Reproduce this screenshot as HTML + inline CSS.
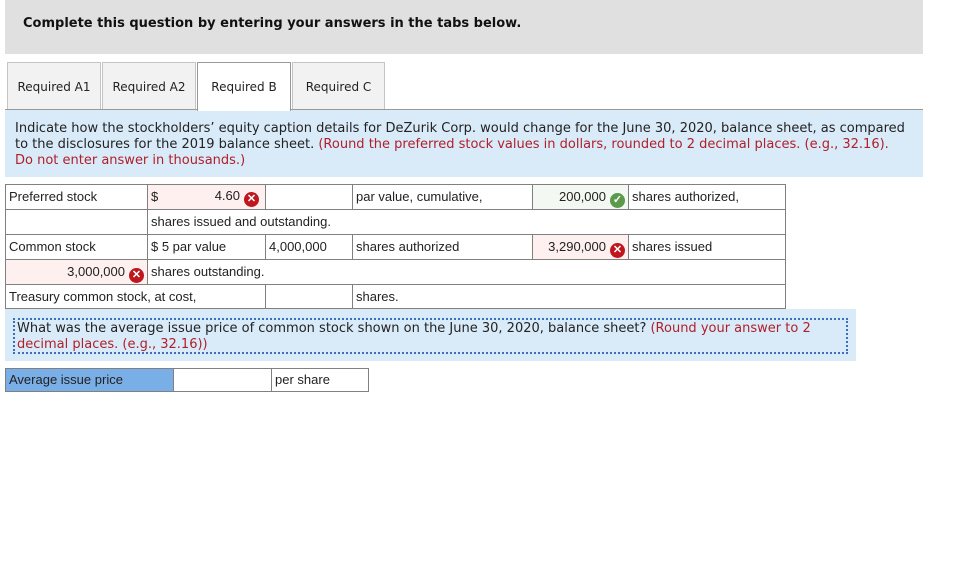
<!DOCTYPE html>
<html><head><style>
body{margin:0;width:973px;height:566px;background:#fff;position:relative;font-family:"DejaVu Sans",Verdana,sans-serif;overflow:hidden}
.a{position:absolute;box-sizing:border-box}
.hdr{left:5px;top:0;width:918px;height:54px;background:#e0e0e0;font-weight:bold;font-size:13px;padding:16px 0 0 18px;color:#111}
.tab{top:62px;height:48px;background:#f2f2f2;border:1px solid #c4c4c4;border-bottom:none;font-size:12px;text-align:center;line-height:48px;color:#222}
.tab.on{background:#fff;border-color:#999;height:49px;z-index:2}
.inst{left:5px;top:109px;width:918px;height:68px;background:#d9ebf9;border-top:1px solid #999;font-size:13px;line-height:16px;padding:11px 0 0 10px;color:#222;white-space:nowrap;overflow:hidden}
.red{color:#b0202a}
.c{border:1px solid #808080;font-family:"Liberation Sans",Arial,sans-serif;font-size:13px;color:#222;padding:4px 3px 0;white-space:nowrap;background:#fff}
.x{display:inline-block;width:15px;height:15px;border-radius:50%;background:#c0161e;color:#fff;font-size:11px;line-height:15px;text-align:center;font-weight:bold;vertical-align:-2px;margin-left:4px}
.ok{background:#5a9a4a}
.q{left:5px;top:309px;width:851px;height:52px;background:#d9ebf9}
.qi{left:13px;top:318px;width:835px;height:36px;border:2px dotted #3b6fb6;font-size:13px;line-height:16px;padding:1px 0 0 2px;color:#222}
</style></head><body>
<div class="a hdr">Complete this question by entering your answers in the tabs below.</div>
<div class="a tab" style="left:7px;width:94px">Required A1</div>
<div class="a tab" style="left:102px;width:94px">Required A2</div>
<div class="a tab on" style="left:197px;width:94px">Required B</div>
<div class="a tab" style="left:292px;width:93px">Required C</div>
<div class="a inst">Indicate how the stockholders’ equity caption details for DeZurik Corp. would change for the June 30, 2020, balance sheet, as compared<br>to the disclosures for the 2019 balance sheet. <span class="red">(Round the preferred stock values in dollars, rounded to 2 decimal places. (e.g., 32.16).<br>Do not enter answer in thousands.)</span></div>

<div class="a c" style="left:5px;top:184px;width:143px;height:26px">Preferred stock</div>
<div class="a c" style="left:147px;top:184px;width:119px;height:26px;background:#fdf0ef">$<span style="position:absolute;right:6px;top:3px">4.60<span class="x">✕</span></span></div>
<div class="a c" style="left:265px;top:184px;width:88px;height:26px"></div>
<div class="a c" style="left:352px;top:184px;width:181px;height:26px">par value, cumulative,</div>
<div class="a c" style="left:532px;top:184px;width:97px;height:26px;background:#f4f8f2;text-align:right">200,000<span class="x ok">✓</span></div>
<div class="a c" style="left:628px;top:184px;width:158px;height:26px">shares authorized,</div>

<div class="a c" style="left:5px;top:209px;width:143px;height:26px"></div>
<div class="a c" style="left:147px;top:209px;width:639px;height:26px">shares issued and outstanding.</div>

<div class="a c" style="left:5px;top:234px;width:143px;height:26px">Common stock</div>
<div class="a c" style="left:147px;top:234px;width:119px;height:26px">$ 5 par value</div>
<div class="a c" style="left:265px;top:234px;width:88px;height:26px">4,000,000</div>
<div class="a c" style="left:352px;top:234px;width:181px;height:26px">shares authorized</div>
<div class="a c" style="left:532px;top:234px;width:97px;height:26px;background:#fdf0ef;text-align:right">3,290,000<span class="x">✕</span></div>
<div class="a c" style="left:628px;top:234px;width:158px;height:26px">shares issued</div>

<div class="a c" style="left:5px;top:259px;width:143px;height:26px;background:#fdf0ef;text-align:right">3,000,000<span class="x">✕</span></div>
<div class="a c" style="left:147px;top:259px;width:639px;height:26px">shares outstanding.</div>

<div class="a c" style="left:5px;top:284px;width:261px;height:25px">Treasury common stock, at cost,</div>
<div class="a c" style="left:265px;top:284px;width:88px;height:25px"></div>
<div class="a c" style="left:352px;top:284px;width:434px;height:25px">shares.</div>

<div class="a q"></div>
<div class="a qi">What was the average issue price of common stock shown on the June 30, 2020, balance sheet? <span class="red">(Round your answer to 2<br>decimal places. (e.g., 32.16))</span></div>

<div class="a c" style="left:5px;top:368px;width:169px;height:24px;background:#7aaee6;padding-top:3px">Average issue price</div>
<div class="a c" style="left:173px;top:368px;width:99px;height:24px"></div>
<div class="a c" style="left:271px;top:368px;width:98px;height:24px;padding-top:3px">per share</div>
</body></html>
